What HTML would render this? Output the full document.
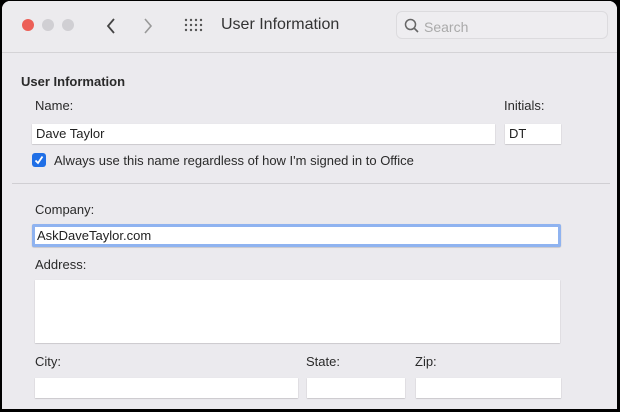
<!DOCTYPE html><html><head><style>
body{margin:0;width:620px;height:412px;overflow:hidden;background:#000;font-family:"Liberation Sans",sans-serif;}
#w{position:absolute;left:2px;top:1px;width:615px;height:408px;background:#ebeaee;border-radius:8px 8px 0 0;overflow:hidden}
.a{position:absolute}
.t{position:absolute;font-size:13px;color:#2a2a2a;white-space:nowrap}
.in{position:absolute;background:#fff;box-shadow:0 0.5px 1px rgba(0,0,0,.25);font-size:13px;color:#222;box-sizing:border-box;padding-left:4px;line-height:19px}
.dot{position:absolute;width:12px;height:12px;border-radius:50%;top:18px;background:#d0cfd3}
</style></head><body><div id="w">
<div class="a" style="left:0;top:0;width:615px;height:51px;background:#ecebee;border-bottom:1px solid #d4d3d6"></div>
<div class="dot" style="left:20px;background:#ec5f57"></div>
<div class="dot" style="left:40px"></div><div class="dot" style="left:60px"></div>
<svg class="a" style="left:100px;top:15px" width="60" height="20"><path d="M12 3 L6 10 L12 17" stroke="#444" stroke-width="1.8" fill="none"/><path d="M43 3 L49 10 L43 17" stroke="#999" stroke-width="1.6" fill="none"/></svg>
<svg class="a" style="left:182px;top:17px" width="20" height="16"><g fill="#555"><circle cx="2" cy="2" r="1.2"/><circle cx="7" cy="2" r="1.2"/><circle cx="12" cy="2" r="1.2"/><circle cx="17" cy="2" r="1.2"/><circle cx="2" cy="7" r="1.2"/><circle cx="7" cy="7" r="1.2"/><circle cx="12" cy="7" r="1.2"/><circle cx="17" cy="7" r="1.2"/><circle cx="2" cy="12" r="1.2"/><circle cx="7" cy="12" r="1.2"/><circle cx="12" cy="12" r="1.2"/><circle cx="17" cy="12" r="1.2"/></g></svg>
<div class="t" style="left:219px;top:15px;font-size:16px;color:#333;font-weight:500">User Information</div>
<div class="a" style="left:394px;top:10px;width:212px;height:28px;border:1px solid #dcdbde;border-radius:6px;box-sizing:border-box;background:#eeedf0"></div>
<svg class="a" style="left:402px;top:17px" width="16" height="16"><circle cx="6.5" cy="6.5" r="5" stroke="#666" stroke-width="1.5" fill="none"/><path d="M10 10 L14 14" stroke="#666" stroke-width="1.6"/></svg>
<div class="t" style="left:422px;top:18px;font-size:14px;color:#aaa">Search</div>
<div class="t" style="left:19px;top:73px;font-weight:bold">User Information</div>
<div class="t" style="left:33px;top:97px">Name:</div>
<div class="t" style="left:502px;top:97px">Initials:</div>
<div class="in" style="left:30px;top:123px;width:463px;height:20px">Dave Taylor</div>
<div class="in" style="left:503px;top:123px;width:56px;height:20px">DT</div>
<div class="a" style="left:30px;top:152px;width:14px;height:14px;border-radius:3px;background:#1f6fe6"></div>
<svg class="a" style="left:30px;top:152px" width="14" height="14"><path d="M3.5 7.5 L6 10 L10.5 3.5" stroke="#fff" stroke-width="1.8" fill="none"/></svg>
<div class="t" style="left:52px;top:152px">Always use this name regardless of how I'm signed in to Office</div>
<div class="a" style="left:10px;top:182px;width:598px;height:1px;background:#d0cfd3"></div>
<div class="t" style="left:33px;top:201px">Company:</div>
<div class="in" style="left:30px;top:223px;width:529px;height:23px;border:3px solid #8fb3f0;border-radius:2px;line-height:17px;padding-left:2px">AskDaveTaylor.com</div>
<div class="t" style="left:33px;top:256px">Address:</div>
<div class="in" style="left:33px;top:279px;width:525px;height:63px"></div>
<div class="t" style="left:33px;top:353px">City:</div>
<div class="t" style="left:304px;top:353px">State:</div>
<div class="t" style="left:413px;top:353px">Zip:</div>
<div class="in" style="left:33px;top:377px;width:263px;height:20px"></div>
<div class="in" style="left:305px;top:377px;width:98px;height:20px"></div>
<div class="in" style="left:414px;top:377px;width:145px;height:20px"></div>
</div></body></html>
